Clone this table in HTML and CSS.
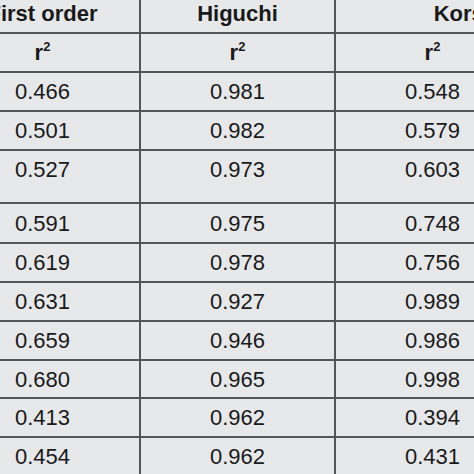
FILE: index.html
```html
<!DOCTYPE html>
<html>
<head>
<meta charset="utf-8">
<link rel="stylesheet" href="styles.css">
</head>
<body>
<div class="frame">
<table class="data">
  <colgroup><col class="c"><col class="c"><col class="c"><col class="c"></colgroup>
  <thead>
    <tr class="h1"><th>First order</th><th>Higuchi</th><th colspan="2" class="kp">Korsmeyer-Peppas</th></tr>
    <tr class="h2"><th>r<sup>2</sup></th><th>r<sup>2</sup></th><th>r<sup>2</sup></th><th>n</th></tr>
  </thead>
  <tbody>
    <tr><td>0.466</td><td>0.981</td><td>0.548</td><td></td></tr>
    <tr><td>0.501</td><td>0.982</td><td>0.579</td><td></td></tr>
    <tr class="tall"><td>0.527</td><td>0.973</td><td>0.603</td><td></td></tr>
    <tr class="r40"><td>0.591</td><td>0.975</td><td>0.748</td><td></td></tr>
    <tr><td>0.619</td><td>0.978</td><td>0.756</td><td></td></tr>
    <tr><td>0.631</td><td>0.927</td><td>0.989</td><td></td></tr>
    <tr><td>0.659</td><td>0.946</td><td>0.986</td><td></td></tr>
    <tr class="r38"><td>0.680</td><td>0.965</td><td>0.998</td><td></td></tr>
    <tr><td>0.413</td><td>0.962</td><td>0.394</td><td></td></tr>
    <tr><td>0.454</td><td>0.962</td><td>0.431</td><td></td></tr>
  </tbody>
</table>
</div>
</body>
</html>
```

FILE: styles.css
```css
html, body {
  margin: 0;
  padding: 0;
  background: #e7e8ea;
}
.frame {
  width: 474px;
  height: 474px;
  overflow: hidden;
  background: #e7e8ea;
}
.data {
  border-collapse: collapse;
  table-layout: fixed;
  width: 780px;
  margin-left: -56px;
  margin-top: -7px;
  font-family: "Liberation Sans", Arial, sans-serif;
  font-size: 22px;
  line-height: 25px;
  color: #1a1a1a;
}
.c { width: 195px; }
.data th, .data td {
  border: 2px solid #555555;
  padding: 0;
  text-align: center;
  vertical-align: middle;
}
.data th {
  font-weight: bold;
}
.data th.kp {
  padding-left: 8px;
}
.data sup {
  font-size: 13px;
  line-height: 0;
  vertical-align: 9px;
}
.data tr { height: 39px; }
.data tr.r40 { height: 40px; }
.data tr.r38 { height: 38px; }
.data tr.tall { height: 53px; }
.data tr.tall td {
  vertical-align: top;
  padding-top: 6px;
}
```
